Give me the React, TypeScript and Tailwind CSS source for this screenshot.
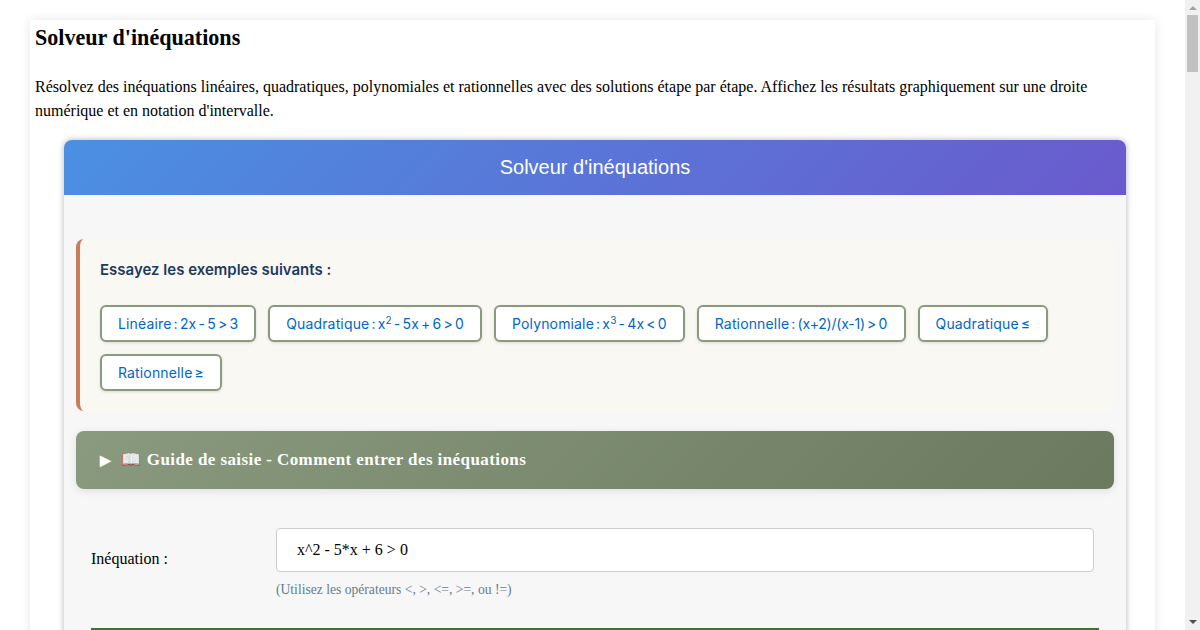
import React from 'react';

const serif = "font-['Liberation_Serif','Times_New_Roman',serif]";

const examples = [
    <>Linéaire : 2x - 5 &gt; 3</>,
    <>Quadratique : x<sup className="text-[10px]">2</sup> - 5x + 6 &gt; 0</>,
    <>Polynomiale : x<sup className="text-[10px]">3</sup> - 4x &lt; 0</>,
    <>Rationnelle : <span className="tracking-[-0.2px]">(x+2)/(x-1)</span> &gt; 0</>,
    <>Quadratique ≤</>,
    <>Rationnelle ≥</>,
];

function Scrollbar() {
    return (
        <div className="w-[15px] h-full shrink-0 bg-[#f1f1f1] flex flex-col items-center justify-between">
            <div className="w-full flex flex-col items-center">
                <svg className="mt-[6px]" width="8" height="4" viewBox="0 0 8 4"><path d="M4 0 L8 4 L0 4 Z" fill="#a3a3a3" /></svg>
                <div className="w-[11px] h-[57px] mt-[5px] bg-[#c1c1c1]" />
            </div>
            <svg className="mb-[6px]" width="8" height="4" viewBox="0 0 8 4"><path d="M0 0 L8 0 L4 4 Z" fill="#505050" /></svg>
        </div>
    );
}

export default function App() {
    return (
        <div className={`flex w-[1200px] h-[630px] overflow-hidden bg-white text-black ${serif}`}>
            <div className="flex-1 h-full overflow-hidden pt-5 px-[30px]">
                <div className="bg-white h-[800px] p-[5px] shadow-[0_0_10px_rgba(0,0,0,0.1)]">
                    <h1 className="text-[22.1px] leading-[25px] font-bold mb-[25px]">Solveur d'inéquations</h1>
                    <p className="text-base leading-6 mb-[17px]">
                        Résolvez des inéquations linéaires, quadratiques, polynomiales et rationnelles avec des solutions étape par étape. Affichez les résultats graphiquement sur une droite numérique et en notation d'intervalle.
                    </p>
                    <div className="ml-[29px] mr-[24px] rounded-lg bg-[#f7f7f7] shadow-[0_0_6px_rgba(0,0,0,0.3)]">
                        <div className="h-[55px] pb-[2px] rounded-t-lg bg-[linear-gradient(135deg,#4a90e2,#6a5acd)] flex items-center justify-center font-['Liberation_Sans',Arial,sans-serif] text-[20px] text-white">
                            Solveur d'inéquations
                        </div>
                        <div className="px-3 pt-11 pb-20">
                            <div className="h-[172px] rounded-lg border-l-4 border-[#c97b5a] bg-[#faf8f3] pl-5 pr-6 pt-[21px] font-['Inter',sans-serif]">
                                <div className="text-[15px] leading-5 font-semibold text-[#1f3a5f]">Essayez les exemples suivants :</div>
                                <div className="flex flex-wrap gap-x-3 gap-y-3 mt-[25px]">
                                    {examples.map((label, index) => (
                                        <button key={index} className="h-[37px] px-4 rounded-md border-2 border-[#8a9a7e] bg-white text-sm leading-none tracking-[0.15px] [word-spacing:-2px] text-[#0066cc] shadow-[0_1px_3px_rgba(0,0,0,0.12)]">
                                            {label}
                                        </button>
                                    ))}
                                </div>
                            </div>
                            <div className="mt-5 h-[58px] rounded-lg bg-[linear-gradient(135deg,#8a9a7e,#6b7a5e)] shadow-[0_2px_8px_rgba(0,0,0,0.1)] flex items-center pl-6 text-white text-[17px] font-bold tracking-[0.41px]">
                                <span className="text-[14px] mr-[10px]">▶</span>
                                <span className="text-base mr-[5px]">📖</span>
                                <span>Guide de saisie - Comment entrer des inéquations</span>
                            </div>
                            <div className="flex mt-[39px] pl-[15px] pr-5">
                                <label className="w-[185px] pt-[21px] text-base leading-5 shrink-0">Inéquation :</label>
                                <div className="flex-1">
                                    <div className="h-11 rounded border border-[#cccccc] bg-white pl-5 flex items-center text-base">x^2 - 5*x + 6 &gt; 0</div>
                                    <div className="mt-[10px] text-[13.6px] leading-4 text-[#647d8c]">(Utilisez les opérateurs &lt;, &gt;, &lt;=, &gt;=, ou !=)</div>
                                </div>
                            </div>
                            <div className="mt-[30px] mx-[15px] h-[3px] bg-[#2e7d32]" />
                        </div>
                    </div>
                </div>
            </div>
            <Scrollbar />
        </div>
    );
}
